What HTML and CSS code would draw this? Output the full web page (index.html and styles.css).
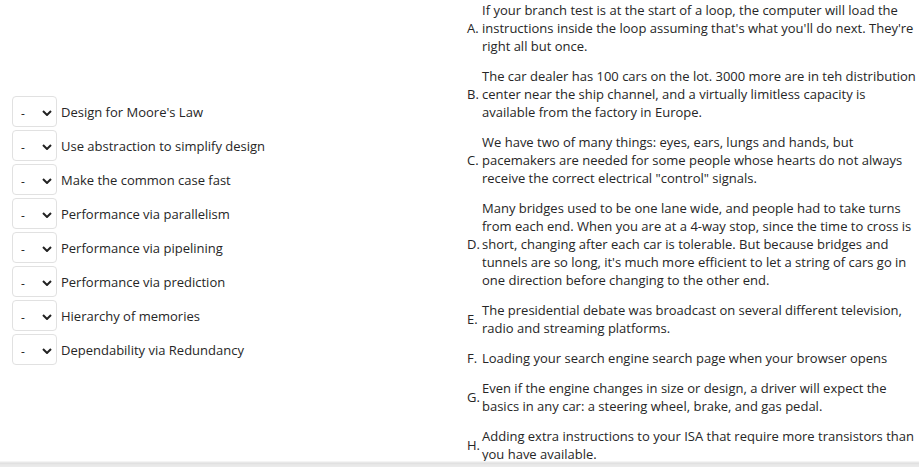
FILE: index.html
```html
<!DOCTYPE html>
<html>
<head>
<meta charset="utf-8">
<link rel="stylesheet" href="styles.css">
</head>
<body>
<div class="page">
  <div class="prompts">
    <div class="prompt"><div class="select"><span class="dash">-</span><svg class="chev" width="10" height="6" viewBox="0 0 10 6"><path d="M1 1 L5 5 L9 1" fill="none" stroke="#222" stroke-width="2"/></svg></div><span class="label">Design for Moore's Law</span></div>
    <div class="prompt"><div class="select"><span class="dash">-</span><svg class="chev" width="10" height="6" viewBox="0 0 10 6"><path d="M1 1 L5 5 L9 1" fill="none" stroke="#222" stroke-width="2"/></svg></div><span class="label">Use abstraction to simplify design</span></div>
    <div class="prompt"><div class="select"><span class="dash">-</span><svg class="chev" width="10" height="6" viewBox="0 0 10 6"><path d="M1 1 L5 5 L9 1" fill="none" stroke="#222" stroke-width="2"/></svg></div><span class="label">Make the common case fast</span></div>
    <div class="prompt"><div class="select"><span class="dash">-</span><svg class="chev" width="10" height="6" viewBox="0 0 10 6"><path d="M1 1 L5 5 L9 1" fill="none" stroke="#222" stroke-width="2"/></svg></div><span class="label">Performance via parallelism</span></div>
    <div class="prompt"><div class="select"><span class="dash">-</span><svg class="chev" width="10" height="6" viewBox="0 0 10 6"><path d="M1 1 L5 5 L9 1" fill="none" stroke="#222" stroke-width="2"/></svg></div><span class="label">Performance via pipelining</span></div>
    <div class="prompt"><div class="select"><span class="dash">-</span><svg class="chev" width="10" height="6" viewBox="0 0 10 6"><path d="M1 1 L5 5 L9 1" fill="none" stroke="#222" stroke-width="2"/></svg></div><span class="label">Performance via prediction</span></div>
    <div class="prompt"><div class="select"><span class="dash">-</span><svg class="chev" width="10" height="6" viewBox="0 0 10 6"><path d="M1 1 L5 5 L9 1" fill="none" stroke="#222" stroke-width="2"/></svg></div><span class="label">Hierarchy of memories</span></div>
    <div class="prompt"><div class="select"><span class="dash">-</span><svg class="chev" width="10" height="6" viewBox="0 0 10 6"><path d="M1 1 L5 5 L9 1" fill="none" stroke="#222" stroke-width="2"/></svg></div><span class="label">Dependability via Redundancy</span></div>
  </div>
  <div class="answers">
    <div class="answer"><span class="letter">A.</span><span class="text">If your branch test is at the start of a loop, the computer will load the instructions inside the loop assuming that's what you'll do next. They're right all but once.</span></div>
    <div class="answer"><span class="letter">B.</span><span class="text">The car dealer has 100 cars on the lot. 3000 more are in teh distribution center near the ship channel, and a virtually limitless capacity is available from the factory in Europe.</span></div>
    <div class="answer"><span class="letter">C.</span><span class="text">We have two of many things: eyes, ears, lungs and hands, but pacemakers are needed for some people whose hearts do not always receive the correct electrical "control" signals.</span></div>
    <div class="answer"><span class="letter">D.</span><span class="text">Many bridges used to be one lane wide, and people had to take turns from each end. When you are at a 4-way stop, since the time to cross is short, changing after each car is tolerable. But because bridges and tunnels are so long, it's much more efficient to let a string of cars go in one direction before changing to the other end.</span></div>
    <div class="answer"><span class="letter">E.</span><span class="text">The presidential debate was broadcast on several different television, radio and streaming platforms.</span></div>
    <div class="answer"><span class="letter">F.</span><span class="text">Loading your search engine search page when your browser opens</span></div>
    <div class="answer"><span class="letter">G.</span><span class="text">Even if the engine changes in size or design, a driver will expect the basics in any car: a steering wheel, brake, and gas pedal.</span></div>
    <div class="answer"><span class="letter">H.</span><span class="text">Adding extra instructions to your ISA that require more transistors than you have available.</span></div>
  </div>
</div>
<div class="scrollbar"></div>
</body>
</html>
```

FILE: styles.css
```css
html, body {
  margin: 0;
  padding: 0;
  background: #fff;
  overflow: hidden;
}
body {
  font-family: "Open Sans", "Liberation Sans", sans-serif;
  font-size: 13px;
  line-height: 18px;
  color: #262626;
}
.page {
  display: flex;
  align-items: center;
  width: 919px;
}
.prompts {
  width: 467px;
  flex: none;
  padding-left: 12px;
  box-sizing: border-box;
  display: flex;
  flex-direction: column;
  gap: 3px;
  margin-top: -2px;
}
.prompt {
  display: flex;
  align-items: center;
  gap: 4px;
}
.select {
  width: 45px;
  height: 31px;
  box-sizing: border-box;
  border: 1px solid #e1e1e1;
  border-radius: 4px;
  display: flex;
  align-items: center;
  padding-left: 8px;
  padding-right: 4px;
  background: #fff;
}
.dash {
  font-size: 12px;
  line-height: 12px;
  margin-top: 5px;
}
.chev {
  margin-left: auto;
  margin-top: 2px;
}
.answers {
  width: 452px;
  flex: none;
  padding-top: 1px;
  display: flex;
  flex-direction: column;
  gap: 12px;
}
.answer {
  display: flex;
  align-items: center;
}
.letter {
  width: 15px;
  flex: none;
}
.text {
  width: 437px;
  flex: none;
}
.scrollbar {
  position: fixed;
  left: 0;
  right: 0;
  bottom: 0;
  height: 6px;
  background: linear-gradient(#f4f4f4 0, #f4f4f4 1px, #dcdcdc 2px, #e6e6e6 3px, #ececec 6px);
}
```
